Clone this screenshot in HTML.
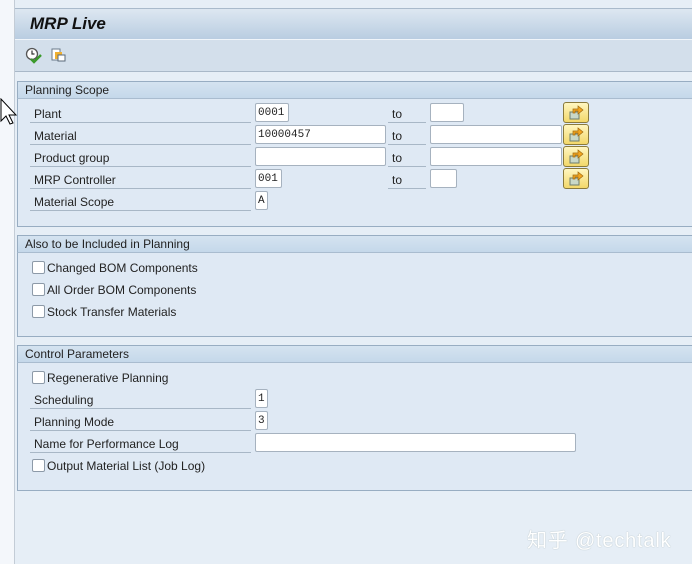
<!DOCTYPE html>
<html><head><meta charset="utf-8"><style>
*{margin:0;padding:0;box-sizing:border-box}
body{width:692px;height:564px;overflow:hidden;background:#f4f7fb;font-family:"Liberation Sans",Tahoma,sans-serif;font-size:12px;color:#222;position:relative}
.a{position:absolute}
.main{left:14px;top:0;width:678px;height:564px;background:#e6eef6;border-left:1px solid #c3ccd6}
.title{left:15px;top:8px;width:677px;height:31px;background:linear-gradient(#dde7f1,#b9cde1);border-top:1px solid #a9bacb}
.title b{position:absolute;left:15px;top:5px;font-size:17px;font-style:italic;font-weight:bold;color:#111}
.tb{left:15px;top:39px;width:677px;height:33px;background:#d3dfeb;border-top:1px solid #f0f5fa;border-bottom:1px solid #a9b8c8}
.gh{left:17px;width:675px;height:18px;background:linear-gradient(#d5e3f0,#c5d8ea);border-top:1px solid #98adc2;border-left:1px solid #98adc2;border-bottom:1px solid #a9bccf;padding-left:7px;line-height:17px;color:#222}
.gb{left:17px;width:675px;background:#dfe9f4;border-left:1px solid #98adc2;border-bottom:1px solid #98adc2}
.lbl{left:30px;width:221px;height:20px;border-bottom:1px solid #a8b7c6;padding-left:4px;padding-top:2px;line-height:19px}
.to{left:388px;width:38px;height:20px;border-bottom:1px solid #a8b7c6;padding-left:4px;padding-top:2px;line-height:19px}
.in{height:19px;background:#fff;border:1px solid #a6b2bf;border-radius:2px;font-family:"Liberation Mono",monospace;font-size:11px;padding-left:2px;padding-top:1px;line-height:17px}
.btn{left:563px;width:26px;height:21px;border:1px solid #8a7a3c;border-radius:3px;background:linear-gradient(#fff6c0,#f3d86a)}
.cb{left:32px;width:13px;height:13px;background:#fff;border:1px solid #8d9aa8;border-radius:2px}
.ct{left:47px;line-height:14px}
</style></head><body>
<div class="a main"></div>
<div class="a title"><b>MRP Live</b></div>
<div class="a tb">
<svg class="a" style="left:10px;top:7px" width="18" height="18" viewBox="0 0 18 18"><circle cx="7" cy="7" r="5.5" fill="#fff" stroke="#555" stroke-width="1.3"/><path d="M7 3.5V7H9.5" stroke="#333" fill="none" stroke-width="1.2"/><path d="M6 12l3 3 7-7" stroke="#3a9a2a" stroke-width="2.4" fill="none"/></svg>
<svg class="a" style="left:35px;top:7px" width="18" height="18" viewBox="0 0 18 18"><rect x="2" y="2" width="8" height="11" fill="#fff" stroke="#6a7a8a"/><rect x="5" y="5" width="7" height="7" fill="#f0b030"/><rect x="8" y="8" width="7" height="6" fill="#fff" stroke="#5a6a7a"/></svg>
</div>

<div class="a gh" style="top:81px">Planning Scope</div>
<div class="a gb" style="top:99px;height:128px"></div>
<div class="a lbl" style="top:103px">Plant</div>
<div class="a lbl" style="top:125px">Material</div>
<div class="a lbl" style="top:147px">Product group</div>
<div class="a lbl" style="top:169px">MRP Controller</div>
<div class="a lbl" style="top:191px">Material Scope</div>
<div class="a in" style="left:255px;top:103px;width:34px">0001</div>
<div class="a in" style="left:255px;top:125px;width:131px">10000457</div>
<div class="a in" style="left:255px;top:147px;width:131px"></div>
<div class="a in" style="left:255px;top:169px;width:27px">001</div>
<div class="a in" style="left:255px;top:191px;width:13px">A</div>
<div class="a to" style="top:103px">to</div>
<div class="a to" style="top:125px">to</div>
<div class="a to" style="top:147px">to</div>
<div class="a to" style="top:169px">to</div>
<div class="a in" style="left:430px;top:103px;width:34px"></div>
<div class="a in" style="left:430px;top:125px;width:132px"></div>
<div class="a in" style="left:430px;top:147px;width:132px"></div>
<div class="a in" style="left:430px;top:169px;width:27px"></div>
<div class="a btn" style="top:102px"></div>
<div class="a btn" style="top:124px"></div>
<div class="a btn" style="top:146px"></div>
<div class="a btn" style="top:168px"></div>
<svg class="a" style="left:568px;top:104px" width="16" height="88" viewBox="0 0 16 88">
<g id="ar"><rect x="2" y="8" width="9" height="7" fill="#c9d8c8" stroke="#6d7d6d"/><path d="M5 9V5h5V2l5 4-5 4V7H7v2z" fill="#f2a520" stroke="#a06a10" stroke-width=".7"/></g>
<use href="#ar" y="22"/><use href="#ar" y="44"/><use href="#ar" y="66"/></svg>

<div class="a gh" style="top:235px">Also to be Included in Planning</div>
<div class="a gb" style="top:253px;height:84px"></div>
<div class="a cb" style="top:261px"></div><div class="a ct" style="top:261px">Changed BOM Components</div>
<div class="a cb" style="top:283px"></div><div class="a ct" style="top:283px">All Order BOM Components</div>
<div class="a cb" style="top:305px"></div><div class="a ct" style="top:305px">Stock Transfer Materials</div>

<div class="a gh" style="top:345px">Control Parameters</div>
<div class="a gb" style="top:363px;height:128px"></div>
<div class="a cb" style="top:371px"></div><div class="a ct" style="top:371px">Regenerative Planning</div>
<div class="a lbl" style="top:389px">Scheduling</div>
<div class="a lbl" style="top:411px">Planning Mode</div>
<div class="a lbl" style="top:433px">Name for Performance Log</div>
<div class="a in" style="left:255px;top:389px;width:13px">1</div>
<div class="a in" style="left:255px;top:411px;width:13px">3</div>
<div class="a in" style="left:255px;top:433px;width:321px"></div>
<div class="a cb" style="top:459px"></div><div class="a ct" style="top:459px">Output Material List (Job Log)</div>

<div class="a" style="left:527px;top:524px;font-size:20px;letter-spacing:0.8px;color:#fff;font-family:'Liberation Sans','Noto Sans CJK SC',sans-serif;text-shadow:0 0 1px #9aa">知乎 @techtalk</div>
<svg class="a" style="left:0;top:98px" width="20" height="30" viewBox="0 0 20 30"><path d="M1 1v22l5-5 4 8 3-1-4-8h7z" fill="#fff" stroke="#000"/></svg>
</body></html>
